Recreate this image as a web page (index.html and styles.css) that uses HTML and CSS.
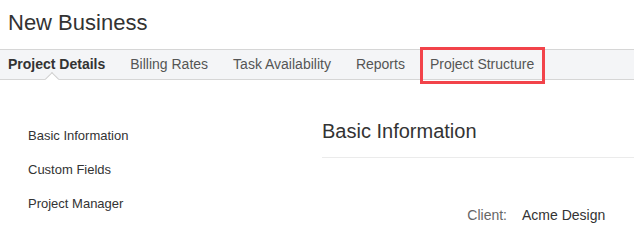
FILE: index.html
```
<!DOCTYPE html>
<html>
<head>
<meta charset="utf-8">
<link rel="stylesheet" href="styles.css">
</head>
<body>
<h1 class="title">New Business</h1>
<nav class="tabs">
  <a class="tab active">Project Details</a>
  <a class="tab">Billing Rates</a>
  <a class="tab">Task Availability</a>
  <a class="tab">Reports</a>
  <a class="tab highlighted">Project Structure</a>
</nav>
<main class="content">
  <ul class="side-nav">
    <li>Basic Information</li>
    <li>Custom Fields</li>
    <li>Project Manager</li>
  </ul>
  <section class="panel">
    <h2 class="panel-title">Basic Information</h2>
    <div class="field">
      <span class="field-label">Client:</span>
      <span class="field-value">Acme Design</span>
    </div>
  </section>
</main>
</body>
</html>
```
FILE: styles.css
```
html, body {
  margin: 0;
  padding: 0;
  background: #fff;
  font-family: "Liberation Sans", Arial, sans-serif;
  color: #333;
  overflow: hidden;
}

.title {
  margin: 0 0 13px 0;
  padding: 10px 8px 0 8px;
  font-size: 22px;
  line-height: 26px;
  font-weight: normal;
  color: #333;
}

.tabs {
  display: flex;
  gap: 25px;
  padding: 0 8px;
  height: 29px;
  background: #f4f5f7;
  border-top: 1px solid #d6d6d6;
  border-bottom: 1px solid #d6d6d6;
}

.tab {
  position: relative;
  display: block;
  font-size: 14px;
  line-height: 29px;
  color: #555;
  white-space: nowrap;
}

.tab.active {
  font-weight: bold;
  color: #333;
}

.tab.active::after {
  content: "";
  position: absolute;
  left: 39px;
  bottom: -5px;
  width: 10px;
  height: 10px;
  background: #fff;
  border-top: 1px solid #cfcfcf;
  border-left: 1px solid #cfcfcf;
  box-sizing: border-box;
  transform: rotate(45deg);
}

.tab.highlighted::after {
  content: "";
  position: absolute;
  left: -10px;
  right: -11px;
  top: -3px;
  bottom: -5px;
  border: 3px solid #f2434a;
}

.content {
  display: grid;
  grid-template-columns: 322px 1fr;
  padding-top: 38px;
}

.side-nav {
  list-style: none;
  margin: 0;
  padding: 1px 0 0 28px;
}

.side-nav li {
  font-size: 13px;
  line-height: 34px;
  color: #333;
}

.panel-title {
  margin: 1px 0 0 0;
  padding-bottom: 14px;
  font-size: 20px;
  line-height: 24px;
  font-weight: normal;
  color: #333;
  border-bottom: 1px solid #ebebeb;
}

.field {
  display: grid;
  grid-template-columns: 185px auto;
  column-gap: 15px;
  margin-top: 47px;
  font-size: 14px;
  line-height: 20px;
}

.field-label {
  text-align: right;
  color: #666;
}

.field-value {
  color: #333;
}
```
